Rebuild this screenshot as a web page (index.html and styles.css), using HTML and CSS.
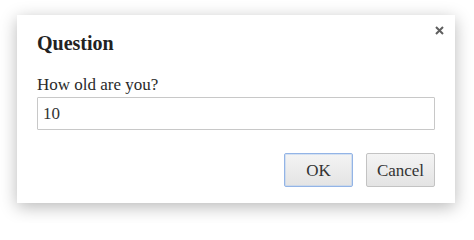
FILE: index.html
```html
<!DOCTYPE html>
<html>
<head>
<meta charset="utf-8">
<link rel="stylesheet" href="styles.css">
</head>
<body>
<div class="dialog">
  <span class="close" aria-label="Close">
    <svg width="9" height="9" viewBox="0 0 9 9"><path d="M1 1L8 8M8 1L1 8" stroke="#5f5f5f" stroke-width="2" fill="none"/></svg>
  </span>
  <div class="title">Question</div>
  <div class="label">How old are you?</div>
  <input class="field" type="text" value="10">
  <div class="actions">
    <button class="btn btn-ok">OK</button>
    <button class="btn">Cancel</button>
  </div>
</div>
</body>
</html>
```

FILE: styles.css
```css
html, body {
  margin: 0;
  padding: 0;
  background: #ffffff;
}
body {
  box-sizing: border-box;
  min-height: 223px;
  padding: 15px 0 20px 17px;
  font-family: "Liberation Serif", "Times New Roman", serif;
  color: #333333;
}
.dialog {
  position: relative;
  box-sizing: border-box;
  width: 438px;
  height: 188px;
  padding: 17px 20px 16px 20px;
  background: #ffffff;
  box-shadow: 0 4px 16px rgba(0, 0, 0, 0.28);
  display: flex;
  flex-direction: column;
}
.close {
  position: absolute;
  top: 11px;
  right: 11px;
  width: 9px;
  height: 9px;
  display: block;
  line-height: 0;
}
.title {
  font-size: 20px;
  font-weight: bold;
  line-height: 23px;
  color: #222222;
}
.label {
  margin-top: 20px;
  font-size: 17px;
  line-height: 20px;
  color: #2a2a2a;
}
.field {
  margin: 2px 0 0 0;
  box-sizing: border-box;
  width: 100%;
  height: 33px;
  padding: 0 5px;
  border: 1px solid #c8c8c8;
  border-radius: 1px;
  font-family: "Liberation Serif", "Times New Roman", serif;
  font-size: 17px;
  color: #333333;
  outline: none;
}
.actions {
  margin-top: 23px;
  display: flex;
  justify-content: flex-end;
  gap: 13px;
}
.btn {
  box-sizing: border-box;
  width: 69px;
  height: 34px;
  padding: 1px 0 0 0;
  border: 1px solid #c3c3c3;
  border-radius: 2px;
  background: linear-gradient(#f4f4f4, #e4e4e4);
  font-family: "Liberation Serif", "Times New Roman", serif;
  font-size: 17px;
  color: #333333;
}
.btn-ok {
  border-color: #93b4e6;
  box-shadow: inset 0 0 0 1px rgba(180, 205, 240, 0.5);
}
```
